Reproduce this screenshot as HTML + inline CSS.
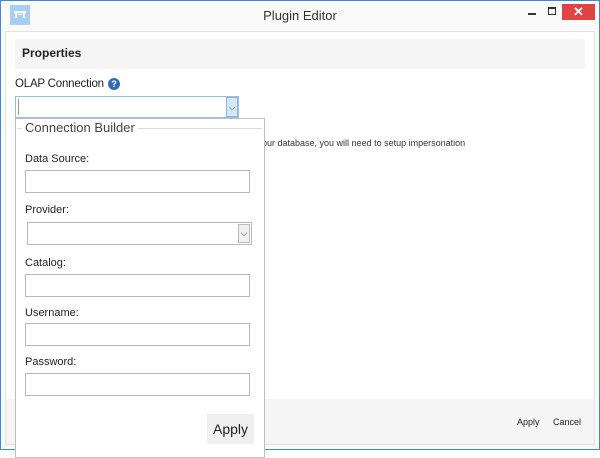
<!DOCTYPE html>
<html><head><style>
*{margin:0;padding:0;box-sizing:border-box}
body{width:600px;height:450px;position:relative;overflow:hidden;background:#fff;font-family:"Liberation Sans",sans-serif;color:#222}
.a{position:absolute}
.in{position:absolute;border:1px solid #b9b9b9;background:#fff}
.lb{position:absolute;font-size:11px;color:#222}
</style></head><body>
<div class="a" style="left:0;top:0;width:600px;height:450px;border:1px solid #3c8ad6;background:#fafafa"></div>
<div class="a" style="left:10px;top:5px;width:20px;height:20px;background:#a7d0f0"></div>
<div class="a" style="left:14px;top:11px;width:12px;height:2px;background:#fff"></div>
<div class="a" style="left:15px;top:13px;width:2px;height:5px;background:#fff"></div>
<div class="a" style="left:23px;top:13px;width:2px;height:5px;background:#fff"></div>
<div class="a" style="left:18px;top:14px;width:4px;height:1px;background:#fff"></div>
<div class="a" style="left:0;top:8px;width:600px;text-align:center;font-size:13px;color:#333">Plugin Editor</div>
<div class="a" style="left:528px;top:13px;width:8px;height:2px;background:#333"></div>
<div class="a" style="left:548px;top:7px;width:8px;height:8px;border:1px solid #333;border-top-width:2px"></div>
<div class="a" style="left:562px;top:4px;width:33px;height:16px;background:#e04343;color:#fff;font-size:13px;text-align:center;line-height:16px;font-weight:bold">✕</div>
<div class="a" style="left:5px;top:31px;width:590px;height:414px;background:#fff;border:1px solid #e3e3e3"></div>
<div class="a" style="left:15px;top:39px;width:570px;height:30px;background:#f5f5f5"></div>
<div class="a" style="left:22px;top:46px;font-size:12px;font-weight:bold">Properties</div>
<div class="a" style="left:15px;top:78px;font-size:11.5px;letter-spacing:-0.2px">OLAP Connection</div>
<div class="a" style="left:108px;top:78px;width:12px;height:12px;border-radius:50%;background:#2f6fb0;color:#fff;font-size:9px;font-weight:bold;text-align:center;line-height:12px">?</div>
<div class="a" style="left:15px;top:96px;width:224px;height:22px;border:1px solid #9bbfe0;background:#fff"></div>
<div class="a" style="left:18px;top:99px;width:1px;height:16px;background:#999"></div>
<div class="a" style="left:226px;top:97px;width:12px;height:20px;background:#d6e8f8;border:1px solid #8ab6e0;font-size:9px;text-align:center;line-height:18px;color:#333">⌵</div>
<div class="a" style="left:262px;top:138px;font-size:9px;color:#333">our database, you will need to setup impersonation</div>
<div class="a" style="left:6px;top:399px;width:588px;height:45px;background:#f5f5f5"></div>
<div class="a" style="left:517px;top:417px;font-size:9px">Apply</div>
<div class="a" style="left:553px;top:417px;font-size:9px">Cancel</div>
<div class="a" style="left:15px;top:118px;width:250px;height:340px;background:#fff;border:1px solid #bdbdbd"></div>
<div class="a" style="left:17px;top:128px;width:245px;height:1px;background:#ddd"></div>
<div class="a" style="left:22px;top:120px;padding:0 3px;background:#fff;font-size:13px;color:#444">Connection Builder</div>
<div class="lb" style="left:25px;top:153px">Data Source:</div>
<div class="in" style="left:25px;top:170px;width:225px;height:23px"></div>
<div class="lb" style="left:25px;top:204px">Provider:</div>
<div class="in" style="left:27px;top:222px;width:225px;height:23px"></div>
<div class="a" style="left:238px;top:224px;width:12px;height:19px;background:#f0f0f0;border:1px solid #bbb;font-size:9px;text-align:center;line-height:17px">⌵</div>
<div class="lb" style="left:25px;top:257px">Catalog:</div>
<div class="in" style="left:25px;top:274px;width:225px;height:23px"></div>
<div class="lb" style="left:25px;top:307px">Username:</div>
<div class="in" style="left:25px;top:323px;width:225px;height:23px"></div>
<div class="lb" style="left:25px;top:356px">Password:</div>
<div class="in" style="left:25px;top:373px;width:225px;height:23px"></div>
<div class="a" style="left:207px;top:414px;width:47px;height:30px;background:#f0f0f0;font-size:14px;text-align:center;line-height:30px">Apply</div>
</body></html>
